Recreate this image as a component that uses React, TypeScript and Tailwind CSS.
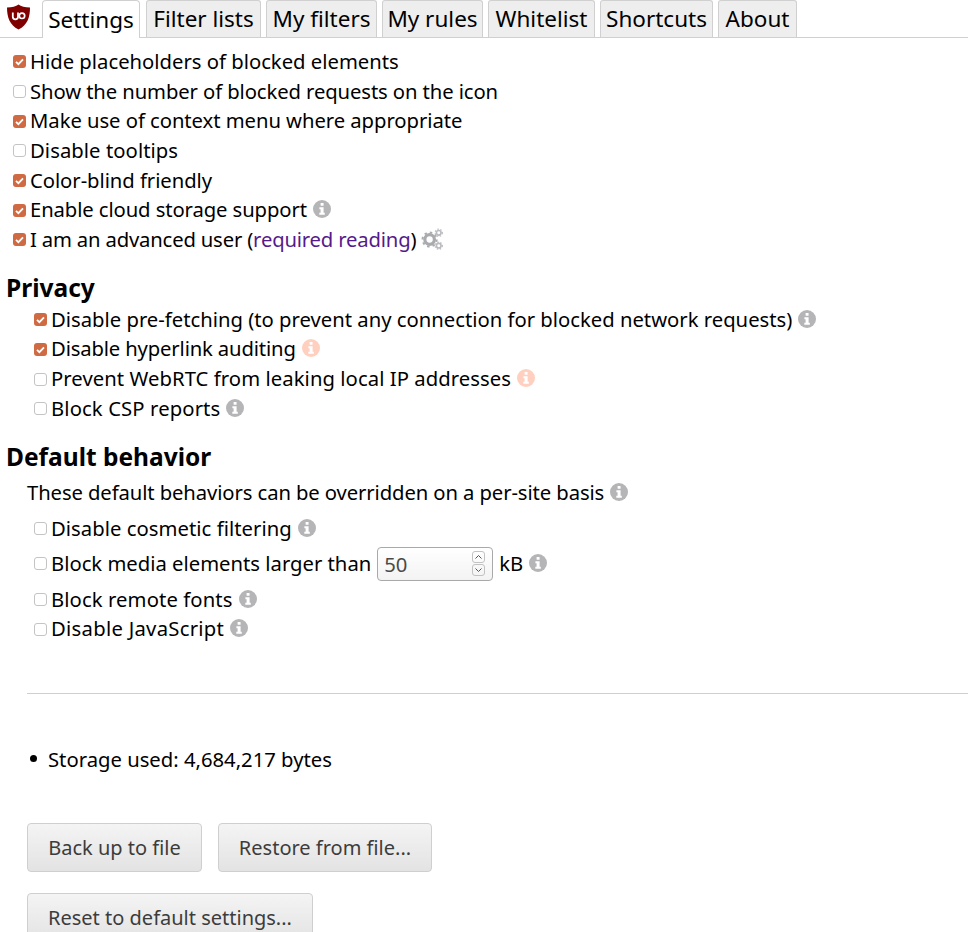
import type { ReactNode } from 'react';

const tabs = [
  { label: 'Filter lists', width: 'w-[115px]' },
  { label: 'My filters', width: 'w-[111px]' },
  { label: 'My rules', width: 'w-[101px]' },
  { label: 'Whitelist', width: 'w-[107px]' },
  { label: 'Shortcuts', width: 'w-[113px]' },
  { label: 'About', width: 'w-[79px]' },
];

function InfoIcon({ warm = false }: { warm?: boolean }) {
  return (
    <svg viewBox="0 0 18 18" className="ml-[6px] h-[18px] w-[18px] shrink-0">
      <circle cx="9" cy="9" r="9" fill={warm ? '#ffd0bf' : '#b5b5b8'} />
      <rect x="7.6" y="3" width="3" height="2.8" rx="0.6" fill="#fff" />
      <path d="M6.4 7.2h4.2v5.6h1.2v2H6.3v-2h1.3V9.2H6.4z" fill="#fff" />
    </svg>
  );
}

function GearsIcon() {
  return (
    <svg viewBox="0 0 24 24" className="ml-[5px] mt-[2px] h-[23px] w-[23px] shrink-0" fill="#a9abae">
      <circle cx="9" cy="12" r="5" fill="none" stroke="#a9abae" strokeWidth="3.4" />
      <circle cx="9" cy="12" r="7.4" fill="none" stroke="#a9abae" strokeWidth="2" strokeDasharray="2.6 3.2" />
      <circle cx="18.5" cy="5" r="2.4" fill="none" stroke="#b9bbbe" strokeWidth="1.7" />
      <circle cx="18.5" cy="5" r="3.8" fill="none" stroke="#b9bbbe" strokeWidth="1.2" strokeDasharray="1.5 1.7" />
      <circle cx="18.5" cy="18.5" r="2.4" fill="none" stroke="#b9bbbe" strokeWidth="1.7" />
      <circle cx="18.5" cy="18.5" r="3.8" fill="none" stroke="#b9bbbe" strokeWidth="1.2" strokeDasharray="1.5 1.7" />
    </svg>
  );
}

function Logo() {
  return (
    <svg viewBox="0 0 23 26" className="h-[26px] w-[23px]">
      <path d="M11.5 0.5 C14 2.5 18 3.5 23 3.5 C23 13 20.5 21 11.5 25.5 C2.5 21 0 13 0 3.5 C5 3.5 9 2.5 11.5 0.5 Z" fill="#800000" />
      <path d="M5.8 8.5v4.2a2.6 2.6 0 0 0 5.2 0V8.5" fill="none" stroke="#fff" strokeWidth="1.8" />
      <circle cx="15" cy="11.8" r="2.7" fill="none" stroke="#fff" strokeWidth="1.7" />
    </svg>
  );
}

function Check({ checked }: { checked?: boolean }) {
  if (checked) {
    return (
      <span className="flex h-[13px] w-[13px] shrink-0 items-center justify-center rounded-[3px] bg-[#cf6a42]">
        <svg viewBox="0 0 13 13" className="h-[13px] w-[13px]">
          <path d="M3 6.8l2.4 2.4L10 4.4" fill="none" stroke="#fff" strokeWidth="1.8" />
        </svg>
      </span>
    );
  }
  return <span className="h-[13px] w-[13px] shrink-0 rounded-[3px] border border-[#c4c4c4] bg-white" />;
}

function Row({
  checked,
  children,
  className = 'h-[29.7px]',
  tracking = '',
}: {
  checked?: boolean;
  children: ReactNode;
  className?: string;
  tracking?: string;
}) {
  return (
    <div className={`flex items-center ${className}`}>
      <Check checked={checked} />
      <div className={`ml-[4px] flex items-center whitespace-nowrap pb-[2px] ${tracking}`}>{children}</div>
    </div>
  );
}

function ActionButton({ children, className = '' }: { children: ReactNode; className?: string }) {
  return (
    <button className={`h-[49px] rounded-[4px] border border-[#cfcfcf] bg-gradient-to-b from-[#f4f4f4] to-[#e3e3e3] pt-[1px] text-[20px] text-[#3c3c3c] ${className}`}>
      {children}
    </button>
  );
}

export default function App() {
  return (
    <div className="h-[932px] overflow-hidden bg-white text-[20.25px] leading-[26px] text-black [font-family:'Noto_Sans',sans-serif]">
      <div className="flex h-[38px] items-end border-b border-[#d0d0d0] pl-[7px]">
        <div className="mb-[7px] mr-[12px]">
          <Logo />
        </div>
        <div className="-mb-px flex h-[38px] w-[98px] items-center justify-center rounded-t-[4px] border border-b-0 border-[#d0d0d0] bg-white text-[22.5px]">
          Settings
        </div>
        <div className="ml-[6px] flex gap-[5px]">
          {tabs.map((tab) => (
            <div key={tab.label} className={`flex h-[37px] items-center justify-center rounded-t-[3px] border border-b-0 border-[#d0d0d0] bg-[#eeeeee] text-[22.5px] ${tab.width}`}>
              {tab.label}
            </div>
          ))}
        </div>
      </div>

      <div className="pl-[13px] pt-[9px]">
        <Row checked>Hide placeholders of blocked elements</Row>
        <Row tracking="tracking-[-0.1px]">Show the number of blocked requests on the icon</Row>
        <Row checked tracking="tracking-[-0.05px]">Make use of context menu where appropriate</Row>
        <Row tracking="tracking-[0.06px]">Disable tooltips</Row>
        <Row checked tracking="tracking-[-0.05px]">Color-blind friendly</Row>
        <Row checked tracking="tracking-[-0.1px]">Enable cloud storage support<InfoIcon /></Row>
        <Row checked tracking="tracking-[-0.17px]">
          I am an advanced user (<span className="text-[#551a8b]">required reading</span>)<GearsIcon />
        </Row>
      </div>

      <h3 className="pl-[6px] pt-[18px] text-[24.5px] font-bold leading-[30px]">Privacy</h3>
      <div className="pl-[34px] pt-[2px]">
        <Row checked>Disable pre-fetching (to prevent any connection for blocked network requests)<InfoIcon /></Row>
        <Row checked tracking="tracking-[-0.15px]">Disable hyperlink auditing<InfoIcon warm /></Row>
        <Row tracking="tracking-[0.065px]">Prevent WebRTC from leaking local IP addresses<InfoIcon warm /></Row>
        <Row tracking="tracking-[0.12px]">Block CSP reports<InfoIcon /></Row>
      </div>

      <h3 className="pl-[6px] pt-[18px] text-[24.5px] font-bold leading-[30px]">Default behavior</h3>
      <div className="mt-[1px] flex h-[42px] items-center pb-[4px] pl-[27px] tracking-[-0.1px]">
        These default behaviors can be overridden on a per-site basis<InfoIcon />
      </div>
      <div className="pl-[34px]">
        <Row className="h-[28px]" tracking="tracking-[0.04px]">Disable cosmetic filtering<InfoIcon /></Row>
        <Row className="h-[42px]">
          Block media elements larger than
          <span className="mx-[6px] mt-[2px] flex h-[34px] w-[116px] items-center justify-between rounded-[4px] border border-[#a9a9a9] bg-gradient-to-b from-white to-[#f3f3f3] pl-[6px] pr-[7px] text-[#4a4a4a]">
            50
            <span className="flex flex-col gap-[1px]">
              <span className="flex h-[12px] w-[13px] items-center justify-center rounded-[3px] border border-[#c2c2c2]">
                <svg viewBox="0 0 9 6" className="h-[6px] w-[9px]"><path d="M1.5 4.5L4.5 1.5l3 3" fill="none" stroke="#555" strokeWidth="1" /></svg>
              </span>
              <span className="flex h-[12px] w-[13px] items-center justify-center rounded-[3px] border border-[#c2c2c2]">
                <svg viewBox="0 0 9 6" className="h-[6px] w-[9px]"><path d="M1.5 1.5L4.5 4.5l3-3" fill="none" stroke="#555" strokeWidth="1" /></svg>
              </span>
            </span>
          </span>
          kB<InfoIcon />
        </Row>
        <Row className="h-[30px]" tracking="tracking-[0.1px]">Block remote fonts<InfoIcon /></Row>
        <Row className="h-[29px]" tracking="tracking-[0.28px]">Disable JavaScript<InfoIcon /></Row>
      </div>

      <div className="ml-[27px] mt-[49px] border-t border-[#cfcfcf]" />

      <div className="flex items-center pl-[30px] pt-[52px]">
        <span className="h-[7px] w-[7px] rounded-full bg-black" />
        <span className="ml-[11px]">Storage used: 4,684,217 bytes</span>
      </div>

      <div className="flex gap-[16px] pl-[27px] pt-[51px]">
        <ActionButton className="w-[175px]">Back up to file</ActionButton>
        <ActionButton className="w-[214px]">Restore from file...</ActionButton>
      </div>
      <div className="pl-[27px] pt-[21px]">
        <ActionButton className="w-[286px]">Reset to default settings...</ActionButton>
      </div>
    </div>
  );
}
